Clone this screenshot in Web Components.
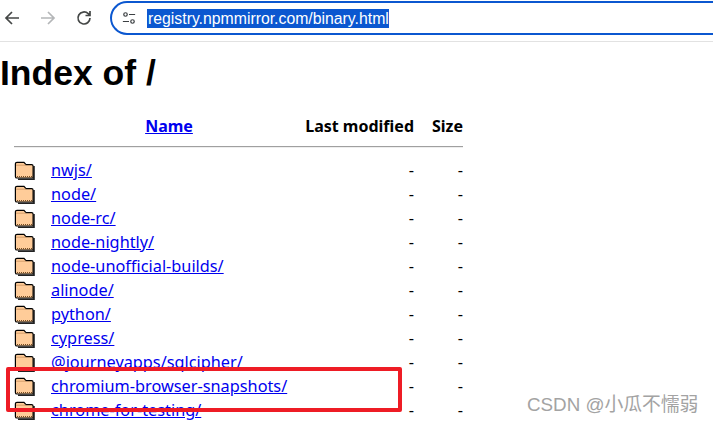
<!DOCTYPE html>
<html lang="en">
<head>
<meta charset="utf-8">
<title>Index of /</title>
<style>
  html, body { margin: 0; height: 424px; overflow: hidden; background: #fff; }
  body { font-family: "Noto Sans", "Liberation Sans", Arial, sans-serif; position: relative; }
</style>
</head>
<body>
<browser-bar url="registry.npmmirror.com/binary.html"></browser-bar>
<index-page>
  <dir-row name="nwjs/"></dir-row>
  <dir-row name="node/"></dir-row>
  <dir-row name="node-rc/"></dir-row>
  <dir-row name="node-nightly/"></dir-row>
  <dir-row name="node-unofficial-builds/"></dir-row>
  <dir-row name="alinode/"></dir-row>
  <dir-row name="python/"></dir-row>
  <dir-row name="cypress/"></dir-row>
  <dir-row name="@journeyapps/sqlcipher/"></dir-row>
  <dir-row name="chromium-browser-snapshots/"></dir-row>
  <dir-row name="chrome-for-testing/"></dir-row>
</index-page>
<red-callout></red-callout>
<water-mark>CSDN @小瓜不懦弱</water-mark>

<script>
class BrowserBar extends HTMLElement {
    connectedCallback() {
        this.attachShadow({ mode: 'open' });
        this.shadowRoot.innerHTML = `
            <style>
                :host { display: flex; align-items: flex-start; height: 41px; box-sizing: content-box; border-bottom: 1px solid #e2e2e2; background: #fff; }
                .nav { display: flex; align-items: center; gap: 14px; padding: 7px 0 0 1px; }
                .nav svg { width: 22px; height: 22px; display: block; fill: none; stroke-width: 1.7; }
                .omni { margin: 1px 0 0 15px; flex: 1; height: 34px; box-sizing: border-box; border: 2px solid #0b57d0; border-right: 0; border-radius: 17px 0 0 17px; display: flex; align-items: center; padding-left: 10px; }
                .omni svg { width: 14px; height: 14px; display: block; fill: none; stroke: #3c4043; stroke-width: 1.4; margin-right: 11px; }
                .url { font: 15.8px/19px "Liberation Sans", Arial, sans-serif; background: #0b57d0; color: #fff; padding: 0 0 0 1px; white-space: nowrap; }
            </style>
            <div class="nav">
                <svg viewBox="0 0 22 22" stroke="#444746"><path d="M18 11H5M11 5l-6 6 6 6"/></svg>
                <svg viewBox="0 0 22 22" stroke="#b4b6b8"><path d="M4 11h13M11 5l6 6-6 6"/></svg>
                <svg viewBox="0 0 22 22" stroke="#444746"><path d="M17 11a6 6 0 1 1-1.8-4.3L17 8.5M17 4v4.5h-4.5"/></svg>
            </div>
            <div class="omni">
                <svg viewBox="0 0 16 16"><circle cx="4" cy="4" r="2"/><path d="M8 4h7M1 12h7"/><circle cx="12" cy="12" r="2"/></svg>
                <span class="url">${this.getAttribute('url')}</span>
            </div>
        `;
    }
}
customElements.define('browser-bar', BrowserBar);

class IndexPage extends HTMLElement {
    connectedCallback() {
        this.attachShadow({ mode: 'open' });
        this.shadowRoot.innerHTML = `
            <style>
                :host { display: block; color: #000; font-family: "Noto Sans", "Liberation Sans", Arial, sans-serif; }
                h1 { font: 700 35.5px/42px "Liberation Sans", Arial, sans-serif; margin: 10px 0 0; }
                .table { width: 449px; margin: 19px 0 0 14px; }
                .head { display: grid; grid-template-columns: 310px 90px 49px; align-items: center; height: 25px; font-size: 16px; font-weight: 700; white-space: nowrap; }
                .head a { color: #0000ee; }
                .name { text-align: center; }
                .mod, .size { justify-self: end; }
                hr { border: 0; height: 1px; background: #a0a0a0; border-bottom: 1px solid #eee; margin: 8px 0 10px; }
            </style>
            <h1>Index of /</h1>
            <div class="table">
                <div class="head">
                    <span class="name"><a href="#">Name</a></span>
                    <span class="mod">Last modified</span>
                    <span class="size">Size</span>
                </div>
                <hr>
                <slot></slot>
            </div>
        `;
    }
}
customElements.define('index-page', IndexPage);

class DirRow extends HTMLElement {
    connectedCallback() {
        this.attachShadow({ mode: 'open' });
        this.shadowRoot.innerHTML = `
            <style>
                :host { display: grid; grid-template-columns: 37px 1fr 90px 49px; align-items: center; height: 24px; font-size: 16.3px; }
                a { color: #0000ee; white-space: nowrap; }
                svg { width: 21px; height: 20px; display: block; }
                .dash { text-align: right; }
            </style>
            <svg viewBox="0 0 21 20">
                <path d="M20 6v13.2H4" fill="none" stroke="#222" stroke-width="1.6"/>
                <path d="M3 2.3h7l2 2.4h5.6a1.5 1.5 0 0 1 1.5 1.5V18H3a1.6 1.6 0 0 1-1.6-1.6V3.9A1.6 1.6 0 0 1 3 2.3z" fill="#ffcc99" stroke="#000" stroke-width="1.2"/>
                <path d="M2 5.2h10" stroke="#c9925f" stroke-width=".8"/>
                <path d="M3 16.5h15.5" stroke="#7a4f24" stroke-width="1" stroke-dasharray="1 1"/>
            </svg>
            <span><a href="#">${this.getAttribute('name')}</a></span>
            <span class="dash">-</span>
            <span class="dash">-</span>
        `;
    }
}
customElements.define('dir-row', DirRow);

class RedCallout extends HTMLElement {
    connectedCallback() {
        this.attachShadow({ mode: 'open' });
        this.shadowRoot.innerHTML = `
            <style>
                :host { position: absolute; left: 6px; top: 367px; width: 396px; height: 45px; box-sizing: border-box; border: 4px solid #ee1c25; border-radius: 2px; pointer-events: none; }
            </style>
        `;
    }
}
customElements.define('red-callout', RedCallout);

class WaterMark extends HTMLElement {
    connectedCallback() {
        this.attachShadow({ mode: 'open' });
        this.shadowRoot.innerHTML = `
            <style>
                :host { position: absolute; left: 527px; top: 393px; font: 18.8px/24px "Liberation Sans", "Noto Sans CJK SC", sans-serif; color: #a3a3a3; white-space: nowrap; }
            </style>
            <slot></slot>
        `;
    }
}
customElements.define('water-mark', WaterMark);
</script>
</body>
</html>
